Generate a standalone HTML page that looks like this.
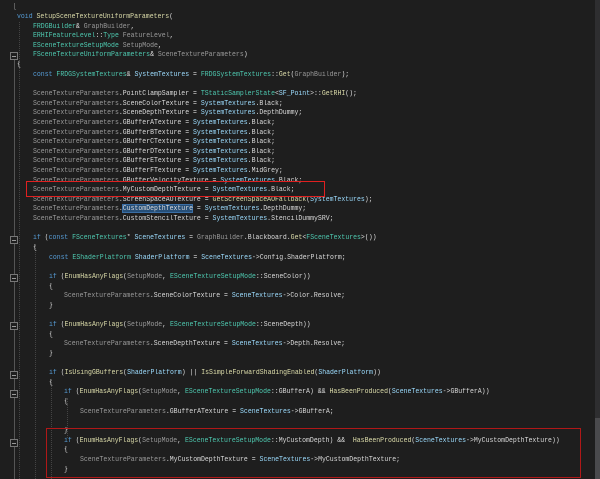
<!DOCTYPE html>
<html><head><meta charset="utf-8"><style>
html,body{margin:0;padding:0;width:600px;height:479px;overflow:hidden;background:#1e1e1e;}
.c{position:absolute;left:0;top:0;width:600px;height:479px;font-family:"Liberation Mono",monospace;font-size:7.5px;}
.l{position:absolute;white-space:pre;height:10px;line-height:10px;color:#dcdcdc;transform:scaleX(0.867);transform-origin:0 0;}
.k{color:#569cd6}.t{color:#4ec9b0}.f{color:#dcdcaa}.v{color:#9cdcfe}.p{color:#9a9a9a}.m{color:#dadada}.o{color:#b4b4b4}
.g{position:absolute;width:1px;background:#555;}
.d{position:absolute;width:0;border-left:1px dotted #444;}
.b{position:absolute;width:6px;height:6px;border:1px solid #777;background:#1e1e1e;}
.b:after{content:"";position:absolute;left:1px;top:2.5px;width:4px;height:1px;background:#999;}
.r{position:absolute;border:1.5px solid #e02020;}
</style></head><body><div class="c">
<div style="position:absolute;right:0;top:0;width:5px;height:479px;background:#2e2e30"></div>
<div style="position:absolute;right:0;top:418px;width:5px;height:61px;background:#4a4a4d"></div>
<div class="g" style="left:14px;top:60px;height:419px"></div>
<div class="b" style="left:10px;top:52px"></div>
<div class="b" style="left:10px;top:236px"></div>
<div class="b" style="left:10px;top:274px"></div>
<div class="b" style="left:10px;top:322px"></div>
<div class="b" style="left:10px;top:371px"></div>
<div class="b" style="left:10px;top:390px"></div>
<div class="b" style="left:10px;top:439px"></div>
<div class="d" style="left:19px;top:22px;height:457px"></div>
<div class="d" style="left:35px;top:245px;height:234px"></div>
<div class="d" style="left:51px;top:380px;height:99px"></div>
<div class="d" style="left:67px;top:398px;height:40px"></div>
<div style="position:absolute;left:122px;top:204px;width:71px;height:9px;background:#264f78;border:1px solid #3a6ea5;box-sizing:border-box"></div>
<div class="l" style="left:13px;top:2px;color:#888">[</div>
<div class="l" style="left:17px;top:12px"><span class="k">void</span> <span class="f">SetupSceneTextureUniformParameters</span>(</div>
<div class="l" style="left:33px;top:22px"><span class="t">FRDGBuilder</span>&amp; <span class="p">GraphBuilder</span>,</div>
<div class="l" style="left:33px;top:31px"><span class="t">ERHIFeatureLevel</span>::<span class="t">Type</span> <span class="p">FeatureLevel</span>,</div>
<div class="l" style="left:33px;top:41px"><span class="t">ESceneTextureSetupMode</span> <span class="p">SetupMode</span>,</div>
<div class="l" style="left:33px;top:50px"><span class="t">FSceneTextureUniformParameters</span>&amp; <span class="p">SceneTextureParameters</span>)</div>
<div class="l" style="left:17px;top:60px">{</div>
<div class="l" style="left:33px;top:70px"><span class="k">const</span> <span class="t">FRDGSystemTextures</span>&amp; <span class="v">SystemTextures</span> = <span class="t">FRDGSystemTextures</span>::<span class="f">Get</span>(<span class="p">GraphBuilder</span>);</div>
<div class="l" style="left:33px;top:89px"><span class="p">SceneTextureParameters</span>.<span class="m">PointClampSampler</span> = <span class="t">TStaticSamplerState</span>&lt;<span class="v">SF_Point</span>&gt;::<span class="f">GetRHI</span>();</div>
<div class="l" style="left:33px;top:99px"><span class="p">SceneTextureParameters</span>.<span class="m">SceneColorTexture</span> = <span class="v">SystemTextures</span>.<span class="m">Black</span>;</div>
<div class="l" style="left:33px;top:108px"><span class="p">SceneTextureParameters</span>.<span class="m">SceneDepthTexture</span> = <span class="v">SystemTextures</span>.<span class="m">DepthDummy</span>;</div>
<div class="l" style="left:33px;top:118px"><span class="p">SceneTextureParameters</span>.<span class="m">GBufferATexture</span> = <span class="v">SystemTextures</span>.<span class="m">Black</span>;</div>
<div class="l" style="left:33px;top:128px"><span class="p">SceneTextureParameters</span>.<span class="m">GBufferBTexture</span> = <span class="v">SystemTextures</span>.<span class="m">Black</span>;</div>
<div class="l" style="left:33px;top:137px"><span class="p">SceneTextureParameters</span>.<span class="m">GBufferCTexture</span> = <span class="v">SystemTextures</span>.<span class="m">Black</span>;</div>
<div class="l" style="left:33px;top:147px"><span class="p">SceneTextureParameters</span>.<span class="m">GBufferDTexture</span> = <span class="v">SystemTextures</span>.<span class="m">Black</span>;</div>
<div class="l" style="left:33px;top:156px"><span class="p">SceneTextureParameters</span>.<span class="m">GBufferETexture</span> = <span class="v">SystemTextures</span>.<span class="m">Black</span>;</div>
<div class="l" style="left:33px;top:166px"><span class="p">SceneTextureParameters</span>.<span class="m">GBufferFTexture</span> = <span class="v">SystemTextures</span>.<span class="m">MidGrey</span>;</div>
<div class="l" style="left:33px;top:176px"><span class="p">SceneTextureParameters</span>.<span class="m">GBufferVelocityTexture</span> = <span class="v">SystemTextures</span>.<span class="m">Black</span>;</div>
<div class="l" style="left:33px;top:185px"><span class="p">SceneTextureParameters</span>.<span class="m">MyCustomDepthTexture</span> = <span class="v">SystemTextures</span>.<span class="m">Black</span>;</div>
<div class="l" style="left:33px;top:195px"><span class="p">SceneTextureParameters</span>.<span class="m">ScreenSpaceAOTexture</span> = <span class="f">GetScreenSpaceAOFallback</span>(<span class="v">SystemTextures</span>);</div>
<div class="l" style="left:33px;top:204px"><span class="p">SceneTextureParameters</span>.<span class="m">CustomDepthTexture</span> = <span class="v">SystemTextures</span>.<span class="m">DepthDummy</span>;</div>
<div class="l" style="left:33px;top:214px"><span class="p">SceneTextureParameters</span>.<span class="m">CustomStencilTexture</span> = <span class="v">SystemTextures</span>.<span class="m">StencilDummySRV</span>;</div>
<div class="l" style="left:33px;top:233px"><span class="k">if</span> (<span class="k">const</span> <span class="t">FSceneTextures</span>* <span class="v">SceneTextures</span> = <span class="p">GraphBuilder</span>.<span class="m">Blackboard</span>.<span class="f">Get</span>&lt;<span class="t">FSceneTextures</span>&gt;())</div>
<div class="l" style="left:33px;top:243px">{</div>
<div class="l" style="left:49px;top:253px"><span class="k">const</span> <span class="t">EShaderPlatform</span> <span class="v">ShaderPlatform</span> = <span class="v">SceneTextures</span>-&gt;<span class="m">Config</span>.<span class="m">ShaderPlatform</span>;</div>
<div class="l" style="left:49px;top:272px"><span class="k">if</span> (<span class="f">EnumHasAnyFlags</span>(<span class="p">SetupMode</span>, <span class="t">ESceneTextureSetupMode</span>::<span class="m">SceneColor</span>))</div>
<div class="l" style="left:49px;top:282px">{</div>
<div class="l" style="left:64px;top:291px"><span class="p">SceneTextureParameters</span>.<span class="m">SceneColorTexture</span> = <span class="v">SceneTextures</span>-&gt;<span class="m">Color</span>.<span class="m">Resolve</span>;</div>
<div class="l" style="left:49px;top:301px">}</div>
<div class="l" style="left:49px;top:320px"><span class="k">if</span> (<span class="f">EnumHasAnyFlags</span>(<span class="p">SetupMode</span>, <span class="t">ESceneTextureSetupMode</span>::<span class="m">SceneDepth</span>))</div>
<div class="l" style="left:49px;top:330px">{</div>
<div class="l" style="left:64px;top:339px"><span class="p">SceneTextureParameters</span>.<span class="m">SceneDepthTexture</span> = <span class="v">SceneTextures</span>-&gt;<span class="m">Depth</span>.<span class="m">Resolve</span>;</div>
<div class="l" style="left:49px;top:349px">}</div>
<div class="l" style="left:49px;top:368px"><span class="k">if</span> (<span class="f">IsUsingGBuffers</span>(<span class="v">ShaderPlatform</span>) || <span class="f">IsSimpleForwardShadingEnabled</span>(<span class="v">ShaderPlatform</span>))</div>
<div class="l" style="left:49px;top:378px">{</div>
<div class="l" style="left:64px;top:387px"><span class="k">if</span> (<span class="f">EnumHasAnyFlags</span>(<span class="p">SetupMode</span>, <span class="t">ESceneTextureSetupMode</span>::<span class="m">GBufferA</span>) &amp;&amp; <span class="f">HasBeenProduced</span>(<span class="v">SceneTextures</span>-&gt;<span class="m">GBufferA</span>))</div>
<div class="l" style="left:64px;top:397px">{</div>
<div class="l" style="left:80px;top:407px"><span class="p">SceneTextureParameters</span>.<span class="m">GBufferATexture</span> = <span class="v">SceneTextures</span>-&gt;<span class="m">GBufferA</span>;</div>
<div class="l" style="left:64px;top:426px">}</div>
<div class="l" style="left:64px;top:436px"><span class="k">if</span> (<span class="f">EnumHasAnyFlags</span>(<span class="p">SetupMode</span>, <span class="t">ESceneTextureSetupMode</span>::<span class="m">MyCustomDepth</span>) &amp;&amp;  <span class="f">HasBeenProduced</span>(<span class="v">SceneTextures</span>-&gt;<span class="m">MyCustomDepthTexture</span>))</div>
<div class="l" style="left:64px;top:445px">{</div>
<div class="l" style="left:80px;top:455px"><span class="p">SceneTextureParameters</span>.<span class="m">MyCustomDepthTexture</span> = <span class="v">SceneTextures</span>-&gt;<span class="m">MyCustomDepthTexture</span>;</div>
<div class="l" style="left:64px;top:465px">}</div>
<div class="r" style="left:26px;top:181px;width:297px;height:14px"></div>
<div class="r" style="left:46px;top:428px;width:533px;height:48px;border-color:#b01818"></div>
</div></body></html>
